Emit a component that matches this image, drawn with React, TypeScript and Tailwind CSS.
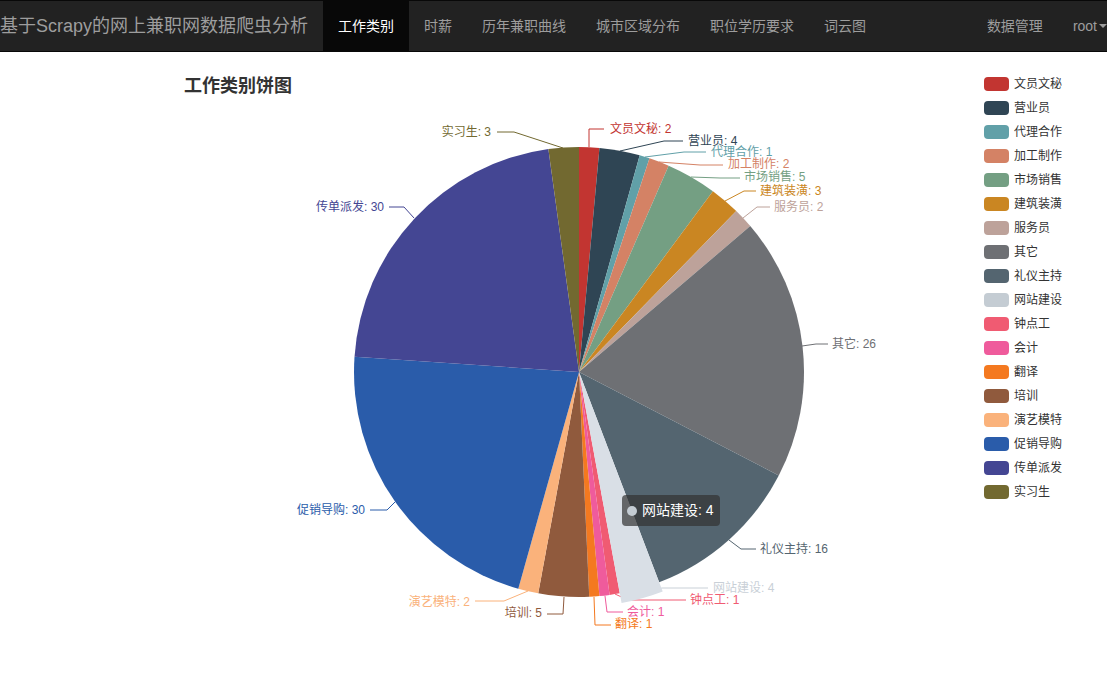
import React from "react";

type Slice = {
  name: string;
  value: number;
  color: string;
  labelColor?: string;
  text: { x: number; y: number; anchor: "start" | "end" };
  line: [number, number][];
};

const CX = 579;
const CY = 372;
const R = 225;
const HOVER = "网站建设";

const SLICES: Slice[] = [
  { name: "文员文秘", value: 2, color: "#c23531", text: { x: 610, y: 129, anchor: "start" }, line: [[589, 147], [589, 129], [604, 129]] },
  { name: "营业员", value: 4, color: "#2f4554", text: { x: 688, y: 141, anchor: "start" }, line: [[620, 151], [664, 141], [683, 141]] },
  { name: "代理合作", value: 1, color: "#61a0a8", text: { x: 711, y: 152, anchor: "start" }, line: [[645, 157], [684, 152], [706, 152]] },
  { name: "加工制作", value: 2, color: "#d48265", text: { x: 728, y: 164, anchor: "start" }, line: [[659, 162], [700, 165], [723, 165]] },
  { name: "市场销售", value: 5, color: "#749f83", text: { x: 744, y: 177, anchor: "start" }, line: [[691, 177], [720, 178], [740, 178]] },
  { name: "建筑装潢", value: 3, color: "#ca8622", text: { x: 760, y: 191, anchor: "start" }, line: [[725, 201], [744, 191], [756, 191]] },
  { name: "服务员", value: 2, color: "#bda29a", text: { x: 774, y: 207, anchor: "start" }, line: [[743, 218], [757, 207], [770, 207]] },
  { name: "其它", value: 26, color: "#6e7074", text: { x: 832, y: 344, anchor: "start" }, line: [[802, 346], [816, 344], [828, 344]] },
  { name: "礼仪主持", value: 16, color: "#546570", text: { x: 760, y: 549, anchor: "start" }, line: [[729, 540], [741, 549], [756, 549]] },
  { name: "网站建设", value: 4, color: "#c4ccd3", labelColor: "#c9d0d7", text: { x: 713, y: 588, anchor: "start" }, line: [[655, 590], [662, 588], [708, 588]] },
  { name: "钟点工", value: 1, color: "#f05b72", text: { x: 690, y: 600, anchor: "start" }, line: [[615, 594], [628, 600], [686, 600]] },
  { name: "会计", value: 1, color: "#ef5b9c", text: { x: 627, y: 612, anchor: "start" }, line: [[605, 596], [607, 612], [623, 612]] },
  { name: "翻译", value: 1, color: "#f47920", text: { x: 615, y: 624, anchor: "start" }, line: [[594, 597], [595, 625], [611, 625]] },
  { name: "培训", value: 5, color: "#905a3d", text: { x: 542, y: 613, anchor: "end" }, line: [[564, 597], [563, 614], [547, 614]] },
  { name: "演艺模特", value: 2, color: "#fab27b", text: { x: 470, y: 602, anchor: "end" }, line: [[528, 591], [504, 601], [475, 601]] },
  { name: "促销导购", value: 30, color: "#2a5caa", text: { x: 365, y: 510, anchor: "end" }, line: [[395, 502], [387, 510], [370, 510]] },
  { name: "传单派发", value: 30, color: "#444693", text: { x: 384, y: 207, anchor: "end" }, line: [[414, 218], [404, 207], [389, 207]] },
  { name: "实习生", value: 3, color: "#726930", text: { x: 491, y: 132, anchor: "end" }, line: [[563, 148], [514, 132], [497, 132]] },
];

const NAV = ["工作类别", "时薪", "历年兼职曲线", "城市区域分布", "职位学历要求", "词云图"];

const FONT = { fontFamily: '"Liberation Sans", "Noto Sans CJK SC", sans-serif' };

function pt(angle: number, r: number) {
  const a = (angle * Math.PI) / 180;
  return [CX + r * Math.sin(a), CY - r * Math.cos(a)];
}

function arc(a0: number, a1: number, r: number) {
  const [x0, y0] = pt(a0, r);
  const [x1, y1] = pt(a1, r);
  const large = a1 - a0 > 180 ? 1 : 0;
  return `M${CX} ${CY} L${x0} ${y0} A${r} ${r} 0 ${large} 1 ${x1} ${y1} Z`;
}

function PieChart() {
  const total = SLICES.reduce((s, d) => s + d.value, 0);
  let acc = 0;
  const arcs = SLICES.map((d) => {
    const a0 = (acc / total) * 360;
    acc += d.value;
    const a1 = (acc / total) * 360;
    return { ...d, a0, a1 };
  });
  const hovered = arcs.find((d) => d.name === HOVER)!;

  return (
    <svg width={960} height={582} viewBox="0 110 960 582" className="block" style={FONT}>
      {arcs
        .filter((d) => d.name !== HOVER)
        .map((d) => (
          <path key={d.name} d={arc(d.a0, d.a1, R)} fill={d.color} />
        ))}
      {arcs.map((d) => (
        <polyline
          key={d.name}
          points={d.line.map((p) => p.join(",")).join(" ")}
          fill="none"
          stroke={d.labelColor ?? d.color}
          strokeWidth={1}
        />
      ))}
      <path d={arc(hovered.a0, hovered.a1, R + 10)} fill="#d9dfe6" />
      {arcs.map((d) => (
        <text
          key={d.name}
          x={d.text.x}
          y={d.text.y}
          textAnchor={d.text.anchor}
          dominantBaseline="central"
          fontSize={12}
          fill={d.labelColor ?? d.color}
        >
          {d.name}: {d.value}
        </text>
      ))}
    </svg>
  );
}

export default function App() {
  return (
    <div className="w-[1107px] h-[692px] overflow-hidden bg-white" style={FONT}>
      <nav className="flex h-[52px] items-stretch overflow-hidden border-y border-[#080808] bg-[#222]">
        <div className="flex w-[323px] shrink-0 items-center whitespace-nowrap text-[18px] text-[#9d9d9d]">
          基于Scrapy的网上兼职网数据爬虫分析
        </div>
        <ul className="flex">
          {NAV.map((item, i) => (
            <li
              key={item}
              className={`flex items-center px-[15px] text-[14px] ${
                i === 0 ? "bg-[#080808] text-white" : "text-[#9d9d9d]"
              }`}
            >
              {item}
            </li>
          ))}
        </ul>
        <ul className="ml-auto mr-[-15px] flex">
          <li className="flex items-center px-[15px] text-[14px] text-[#9d9d9d]">数据管理</li>
          <li className="flex items-center whitespace-nowrap px-[15px] text-[14px] text-[#9d9d9d]">
            root
            <span className="ml-[2px] inline-block h-0 w-0 border-x-4 border-t-4 border-x-transparent border-t-[#9d9d9d]" />
          </li>
        </ul>
      </nav>

      <main className="flex">
        <section className="w-[960px] shrink-0">
          <h1 className="pl-[184px] pt-[22px] pb-[12px] text-[18px] font-bold leading-[24px] text-[#333]">
            工作类别饼图
          </h1>
          <PieChart />
        </section>

        <ul className="flex flex-col gap-[10px] pl-[24px] pt-[25px]">
          {SLICES.map((d) => (
            <li key={d.name} className="flex h-[14px] items-center gap-[5px] text-[12px] text-[#333]">
              <span className="h-[14px] w-[25px] rounded-[4px]" style={{ backgroundColor: d.color }} />
              <span className="leading-[14px] whitespace-nowrap">{d.name}</span>
            </li>
          ))}
        </ul>
      </main>

      <div className="pointer-events-none absolute left-[622px] top-[495px] flex h-[31px] items-center gap-[5px] rounded-[4px] bg-[rgba(50,50,50,0.7)] pl-[5px] pr-[6px] text-[14px] text-white">
        <span className="h-[10px] w-[10px] rounded-full bg-[#c4ccd3]" />
        网站建设: 4
      </div>
    </div>
  );
}
